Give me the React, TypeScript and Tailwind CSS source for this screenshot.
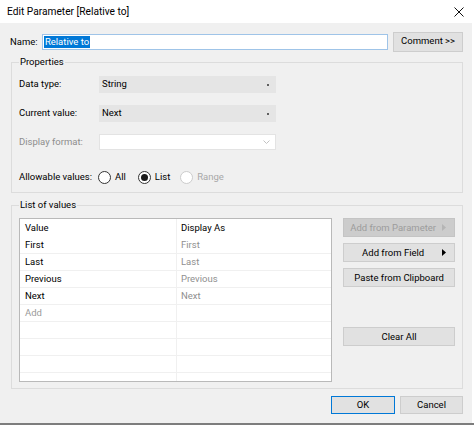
import React from "react";

const font = { fontFamily: 'Roboto, Lato, "Noto Sans", sans-serif' };

function Radio({ checked, disabled }: { checked?: boolean; disabled?: boolean }) {
  return (
    <span
      className={`flex items-center justify-center w-[13px] h-[13px] rounded-full border bg-white ${
        disabled ? "border-[#cccccc]" : "border-[#333333]"
      }`}
    >
      {checked && <span className="w-[7px] h-[7px] rounded-full bg-[#1a1a1a]" />}
    </span>
  );
}

function Dot() {
  return <span className="mr-[7px] w-[2px] h-[2px] bg-[#333333] rounded-full" />;
}

function Btn({
  children,
  disabled,
  arrow,
  className = "",
}: {
  children: React.ReactNode;
  disabled?: boolean;
  arrow?: boolean;
  className?: string;
}) {
  return (
    <div
      className={`flex items-center h-[19px] border whitespace-nowrap ${
        disabled
          ? "bg-[#cccccc] border-[#c4c4c4] text-[#9c9c9c]"
          : "bg-[#e1e1e1] border-[#cdcdcd] text-black"
      } ${className}`}
    >
      <span className="flex-1 text-center leading-[17px]">{children}</span>
      {arrow && (
        <svg width="4" height="7" viewBox="0 0 4 7" className="mr-[8px]">
          <path d="M0 0 L4 3.5 L0 7 Z" fill={disabled ? "#b5b5b5" : "#000"} />
        </svg>
      )}
    </div>
  );
}

const rows: { v: string; d: string; add?: boolean }[] = [
  { v: "First", d: "First" },
  { v: "Last", d: "Last" },
  { v: "Previous", d: "Previous" },
  { v: "Next", d: "Next" },
  { v: "Add", d: "", add: true },
  { v: "", d: "" },
  { v: "", d: "" },
  { v: "", d: "" },
];

export default function App() {
  return (
    <div className="w-[474px] h-[425px] bg-white flex flex-col text-[9.5px] text-black whitespace-nowrap" style={font}>
      {/* Title bar */}
      <div className="h-[23px] flex items-center justify-between pl-[7px] pr-[10px] shrink-0">
        <span className="text-[10.2px] leading-[16px]">Edit Parameter [Relative to]</span>
        <svg width="10" height="10" viewBox="0 0 10 10">
          <path d="M0.5 0.5 L9.5 9.5 M9.5 0.5 L0.5 9.5" stroke="#111" strokeWidth="1" />
        </svg>
      </div>

      {/* Body */}
      <div className="flex-1 w-[472px] bg-[#f0f0f0] pl-[10px] pr-[9px] flex flex-col">
        {/* Name row */}
        <div className="mt-[9px] h-[19px] flex items-center">
          <span className="w-[32px] leading-[14px]">Name:</span>
          <div className="w-[347px] h-[16px] bg-white border border-[#9fc4e8] flex items-center pl-[1px]">
            <span className="bg-[#0078d7] text-white leading-[12px] h-[12px] px-[1px]">Relative to</span>
          </div>
          <div className="ml-[5px] w-[70px] h-[20px] bg-[#e1e1e1] border border-[#cdcdcd] flex items-center justify-center">
            Comment &gt;&gt;
          </div>
        </div>

        {/* Properties group */}
        <div className="mt-[11px] ml-[1px] border border-[#dcdcdc] pl-[7px] pb-[6px] flex flex-col">
          <div className="-mt-[8px] h-[14px] leading-[14px] w-fit px-[1px] bg-[#f0f0f0]">Properties</div>

          <div className="mt-[7px] h-[17px] flex items-center">
            <span className="w-[80px]">Data type:</span>
            <div className="w-[177px] h-[17px] bg-[#e5e5e5] flex items-center justify-between pl-[3px]">
              <span>String</span>
              <Dot />
            </div>
          </div>

          <div className="mt-[12px] h-[17px] flex items-center">
            <span className="w-[80px]">Current value:</span>
            <div className="w-[177px] h-[17px] bg-[#e5e5e5] flex items-center justify-between pl-[3px]">
              <span>Next</span>
              <Dot />
            </div>
          </div>

          <div className="mt-[12px] h-[16px] flex items-center">
            <span className="w-[80px] text-[#8d8d8d]">Display format:</span>
            <div className="w-[177px] h-[16px] bg-white border border-[#e3e3e3] flex items-center justify-end pr-[5px]">
              <svg width="7" height="4" viewBox="0 0 7 4">
                <path d="M0.5 0.5 L3.5 3.5 L6.5 0.5" stroke="#c2c2c2" fill="none" strokeWidth="1" />
              </svg>
            </div>
          </div>

          <div className="mt-[19px] h-[17px] flex items-center">
            <span className="w-[79px]">Allowable values:</span>
            <Radio />
            <span className="ml-[4px]">All</span>
            <span className="ml-[12px]">
              <Radio checked />
            </span>
            <span className="ml-[4px]">List</span>
            <span className="ml-[10px]">
              <Radio disabled />
            </span>
            <span className="ml-[4px] text-[#a8a8a8]">Range</span>
          </div>
        </div>

        {/* List of values group */}
        <div className="mt-[12px] ml-[1px] border border-[#dcdcdc] pl-[7px] pr-[7px] pb-[6px] flex flex-col">
          <div className="-mt-[8px] h-[14px] leading-[14px] w-fit px-[1px] bg-[#f0f0f0]">List of values</div>
          <div className="mt-[6px] flex">
            {/* table */}
            <div className="w-[314px] h-[164px] bg-white border border-[#b9b9b9] flex flex-col">
              <div className="h-[18px] flex items-center shrink-0">
                <span className="w-[157px] pl-[5px] border-r border-[#f0f0f0] h-full flex items-center">Value</span>
                <span className="pl-[4px]">Display As</span>
              </div>
              {rows.map((r, i) => (
                <div key={i} className="h-[17px] flex shrink-0 border-b border-[#f0f0f0]">
                  <span
                    className={`w-[157px] pl-[5px] border-r border-[#f0f0f0] flex items-center ${
                      r.add ? "text-[#9a9a9a]" : "text-black"
                    }`}
                  >
                    {r.v}
                  </span>
                  <span className="pl-[4px] flex items-center text-[#8f8f8f]">{r.d}</span>
                </div>
              ))}
              <div className="flex-1 flex">
                <span className="w-[157px] border-r border-[#f0f0f0]" />
              </div>
            </div>

            {/* buttons */}
            <div className="ml-[11px] w-[112px] flex flex-col">
              <Btn disabled arrow>
                Add from Parameter
              </Btn>
              <Btn arrow className="mt-[6px]">
                Add from Field
              </Btn>
              <Btn className="mt-[6px]">Paste from Clipboard</Btn>
              <Btn className="mt-[40px]">Clear All</Btn>
            </div>
          </div>
        </div>

        {/* OK / Cancel */}
        <div className="mt-[7px] flex justify-end">
          <div className="w-[64px] h-[18px] bg-[#e1e1e1] border border-[#0078d7] flex items-center justify-center">OK</div>
          <div className="ml-[5px] w-[63px] h-[18px] bg-[#e1e1e1] border border-[#cdcdcd] flex items-center justify-center">
            Cancel
          </div>
        </div>
      </div>
      <div className="h-[2px] bg-[#7d7d7d] shrink-0" />
    </div>
  );
}
